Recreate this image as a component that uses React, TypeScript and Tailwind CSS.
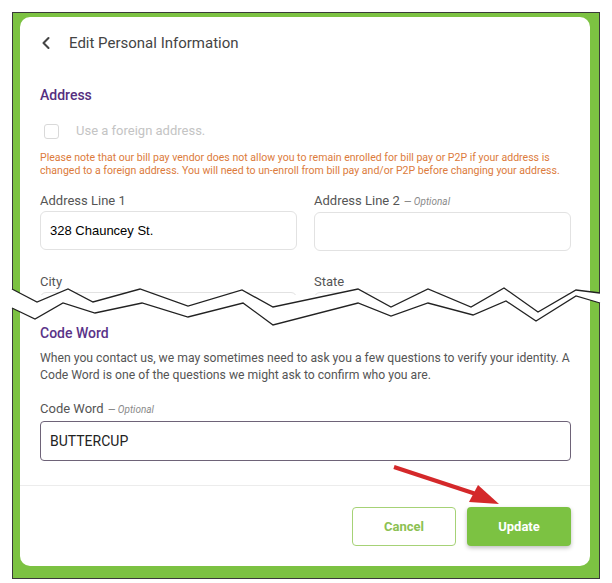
import { ChevronLeft } from "lucide-react"

// zigzag "torn page" lines, in page coordinates
const TOP_LINE: [number, number][] = [
  [12, 289], [37, 302], [68, 289], [93, 302], [140, 289], [188, 306], [242, 290], [273, 307],
  [358, 289], [391, 307], [428, 289], [471, 307], [504, 288], [538, 312], [576, 290], [600, 293],
]
const BOTTOM_LINE: [number, number][] = [
  [12, 308], [35, 319], [63, 303], [95, 313], [142, 303], [188, 317], [243, 303], [273, 325],
  [358, 303], [391, 316], [428, 303], [473, 315], [506, 301], [536, 321], [576, 296], [600, 303],
]

const pts = (list: [number, number][]) => list.map(([x, y]) => `${x},${y}`).join(" ")

function TornEdge() {
  const fill = [
    [0, TOP_LINE[0][1]] as [number, number],
    ...TOP_LINE,
    [612, TOP_LINE[TOP_LINE.length - 1][1]] as [number, number],
    [612, BOTTOM_LINE[BOTTOM_LINE.length - 1][1]] as [number, number],
    ...[...BOTTOM_LINE].reverse(),
    [0, BOTTOM_LINE[0][1]] as [number, number],
  ]
  return (
    <svg className="absolute inset-0 pointer-events-none" width="612" height="583" viewBox="0 0 612 583">
      <polygon points={pts(fill)} fill="#ffffff" />
      <polyline points={pts(TOP_LINE)} fill="none" stroke="#222" strokeWidth="1.3" strokeLinejoin="miter" />
      <polyline points={pts(BOTTOM_LINE)} fill="none" stroke="#222" strokeWidth="1.3" strokeLinejoin="miter" />
    </svg>
  )
}

function RedArrow() {
  return (
    <svg className="absolute inset-0 pointer-events-none" width="612" height="583" viewBox="0 0 612 583">
      <line x1="394" y1="467" x2="482" y2="496" stroke="#d4282a" strokeWidth="4" />
      <polygon points="499,504 478,485 469,502" fill="#d4282a" />
    </svg>
  )
}

function Label({ text, optional }: { text: string; optional?: boolean }) {
  return (
    <div className="text-[13px] leading-[18px] text-[#555]">
      {text}
      {optional && <span className="ml-1 text-[10px] italic text-[#8a8a8a]">— Optional</span>}
    </div>
  )
}

export default function App() {
  return (
    <div className="relative w-[612px] h-[583px] bg-white overflow-hidden font-['Roboto',sans-serif]">
      <div className="mx-3 mt-3 h-[567px] border border-[#3a3a3a] bg-[#7cc242] pl-[7px] pt-[4px] pr-[9px]">
        <div className="h-[549px] rounded-[10px] bg-white flex flex-col">
          {/* Header */}
          <header className="h-[52px] flex items-center pl-[16px] gap-[13px] text-[#444]">
            <ChevronLeft size={20} strokeWidth={2.5} />
            <h1 className="text-[15px]">Edit Personal Information</h1>
          </header>

          <div className="pl-5 pr-[19px]">
            {/* Address */}
            <h2 className="mt-4 text-[14px] leading-5 font-medium text-[#552f80]">Address</h2>
            <div className="mt-4 h-5 flex items-center">
              <span className="ml-1 w-[15px] h-[15px] rounded-[3px] border border-[#d9d9d9]" />
              <span className="ml-[17px] text-[13px] text-[#c4c4c4]">Use a foreign address.</span>
            </div>
            <p className="mt-[10px] text-[10.55px] leading-[13px] text-[#dc7b3c]">
              Please note that our bill pay vendor does not allow you to remain enrolled for bill pay or P2P if your address is
              changed to a foreign address. You will need to un-enroll from bill pay and/or P2P before changing your address.
            </p>

            <div className="mt-[15px] grid grid-cols-2 gap-x-[17px]">
              <div>
                <Label text="Address Line 1" />
                <div className="mt-px h-[39px] rounded-md border border-[#e2e2e2] px-[9px] flex items-center text-[13px] text-black font-['Liberation_Sans',Arial,sans-serif]">
                  328 Chauncey St.
                </div>
              </div>
              <div>
                <Label text="Address Line 2" optional />
                <div className="mt-px h-[39px] rounded-md border border-[#e2e2e2]" />
              </div>
            </div>

            {/* cut off by the torn edge */}
            <div className="h-[44px] overflow-hidden pt-[22px] grid grid-cols-2 gap-x-[17px]">
              <div>
                <Label text="City" />
                <div className="mt-px h-[40px] rounded-md border border-[#e2e2e2]" />
              </div>
              <div>
                <Label text="State" />
                <div className="mt-px h-[40px] rounded-md border border-[#e2e2e2]" />
              </div>
            </div>

            {/* Code Word */}
            <h2 className="mt-[28px] text-[14px] leading-5 font-medium text-[#5a3388]">Code Word</h2>
            <p className="mt-[7px] text-[12.2px] leading-[17px] text-[#555] whitespace-nowrap">
              When you contact us, we may sometimes need to ask you a few questions to verify your identity. A
              <br />
              Code Word is one of the questions we might ask to confirm who you are.
            </p>
            <div className="mt-4">
              <Label text="Code Word" optional />
              <div className="mt-[2px] h-[40px] rounded-[4px] border border-[#6e6378] px-[9px] flex items-center text-[14px] text-[#222]">
                BUTTERCUP
              </div>
            </div>
          </div>

          <div className="mt-6 border-t border-[#ececec]" />

          <div className="pt-[21px] pr-[19px] flex justify-end gap-[11px]">
            <button className="w-[104px] h-[39px] rounded-[4px] border border-[#a6d276] bg-white text-[13px] font-bold text-[#8cc152]">
              Cancel
            </button>
            <button className="w-[104px] h-[39px] rounded-[4px] bg-[#7cc242] text-[13px] font-bold text-white shadow-[0_2px_4px_rgba(0,0,0,0.25)]">
              Update
            </button>
          </div>
        </div>
      </div>

      <TornEdge />
      <RedArrow />
    </div>
  )
}
